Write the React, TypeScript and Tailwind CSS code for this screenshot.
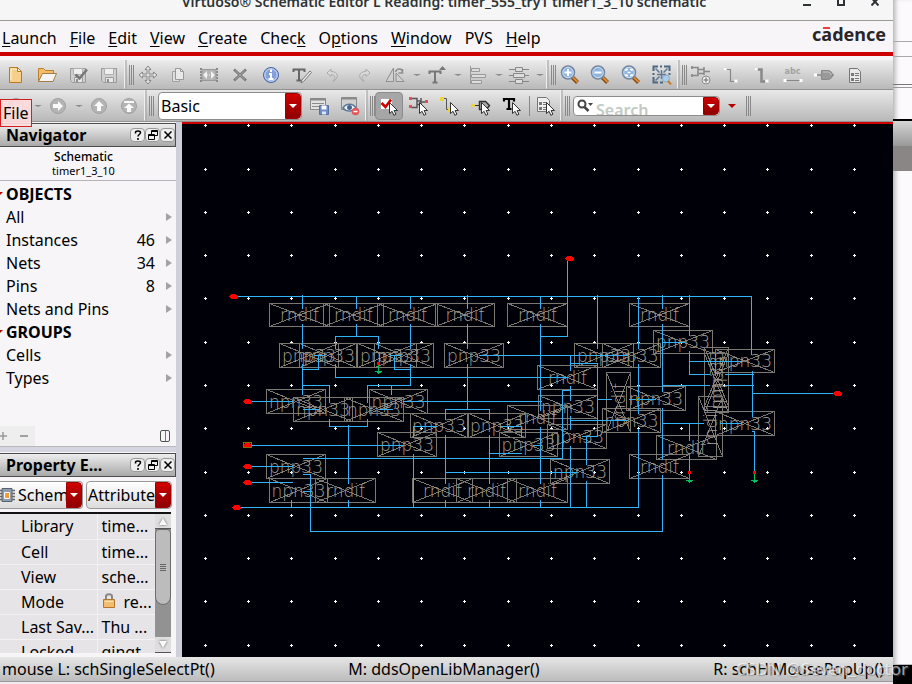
import { useState } from 'react';
import type { ReactNode } from 'react';

type Box = [x: number, y: number, label: string, w?: number, h?: number];
type Wire = string;

const MENUS = [
  { label: 'Launch', key: 0 },
  { label: 'File', key: 0 },
  { label: 'Edit', key: 0 },
  { label: 'View', key: 0 },
  { label: 'Create', key: 0 },
  { label: 'Check', key: 4 },
  { label: 'Options', key: 1 },
  { label: 'Window', key: 0 },
  { label: 'PVS', key: -1 },
  { label: 'Help', key: 0 },
];

const OBJECTS = [
  { name: 'All', count: '' },
  { name: 'Instances', count: '46' },
  { name: 'Nets', count: '34' },
  { name: 'Pins', count: '8' },
  { name: 'Nets and Pins', count: '' },
];

const GROUPS = [
  { name: 'Cells', count: '' },
  { name: 'Types', count: '' },
];

const PROPERTIES = [
  ['Library', 'time...'],
  ['Cell', 'time...'],
  ['View', 'sche...'],
  ['Mode', 're...'],
  ['Last Sav...', 'Thu ...'],
  ['Locked', 'qingt'],
];

// instances, canvas coordinates of the top left corner
const BOXES: Box[] = [
  [269, 303, 'rndif', 60, 23],
  [323, 303, 'rndif', 60, 23],
  [377, 303, 'rndif', 60, 23],
  [435, 303, 'rndif', 59, 23],
  [507, 303, 'rndif', 60, 23],
  [629, 303, 'rndif', 60, 23],
  [279, 343, 'pnp33'],
  [299, 343, 'pnp33', 57],
  [357, 343, 'pnp33'],
  [374, 343, 'pnp33'],
  [444, 343, 'pnp33'],
  [574, 343, 'pnp33'],
  [602, 343, 'pnp33', 58],
  [653, 330, 'pnp33', 59, 23],
  [715, 349, 'npn33', 59, 23],
  [715, 411, 'npn33'],
  [626, 386, 'npn33'],
  [602, 408, 'npn33', 58],
  [656, 435, 'rndif', 60],
  [629, 454, 'rndif', 60],
  [537, 365, 'rndif', 60],
  [538, 395, 'npn33', 59, 23],
  [507, 405, 'rndif', 60],
  [547, 424, 'npn33'],
  [499, 432, 'pnp33', 58],
  [410, 413, 'pnp33', 57],
  [468, 413, 'pnp33', 57],
  [550, 459, 'npn33'],
  [412, 478, 'rndif', 60],
  [456, 478, 'rndif', 60],
  [507, 478, 'rndif', 60],
  [266, 389, 'npn33'],
  [293, 397, 'npn33'],
  [344, 397, 'npn33'],
  [369, 389, 'npn33', 58],
  [377, 432, 'pnp33'],
  [266, 454, 'pnp33'],
  [269, 478, 'npn33', 58],
  [315, 478, 'rndif', 60],
  [704, 347, 'pnp33', 24, 59],
  [704, 353, 'pnp33', 24, 59],
  [698, 396, 'rndif', 24, 60],
  [606, 372, 'rndif', 24, 60],
];

const WIRES: Wire[] = [
  'M234 296H751V354',
  'M302 294V308M356 295V308M410 295V308M467 294V308M540 295V308M597 294V348M638 295V348M662 294V308M689 294V335',
  'M302 323V348M410 323V348M467 323V348M356 323V336M335 348V336H378V348',
  'M302 363V394M302 369H318V355M313 355H324M335 363V377H568',
  'M410 363V385M410 369H394V355M389 355H400',
  'M302 385H329V402M410 385H367V402M391 385V394',
  'M247 401H292M302 409H319M378 409H392M402 401H541',
  'M329 418V426H367V418M348 424V483M348 499V507',
  'M247 445H403M247 466H292M247 482H292',
  'M302 458H562V390H570M302 474H310V531H662V474M302 491H311',
  'M236 507H638V428M291 499V507',
  'M436 426H413V437M413 453V507M467 363V409M445 419V409H489V419',
  'M445 434V483M445 499V507M489 434V483M489 499V507M500 426H521V436M489 453H521M445 472H576',
  'M569 258H567V336H540M540 323V410M540 426V483M540 499V507M532 445H541',
  'M478 355H627M570 354V370M570 385V400M570 415V429M570 445V507M570 363H597V436H581',
  'M570 420H627M597 399H611M628 399H655M586 436V464M586 480V507',
  'M638 363V413M662 323V391M662 407V459',
  'M689 350V374H709M689 361H741M662 342H684M662 385H709M724 385H753M724 374H753',
  'M752 370V416M752 393H837M662 423H703M719 423H741M689 422V440M689 455V472M751 431H754V472',
];

const PINS = [
  [233, 296],
  [247, 401],
  [247, 445],
  [247, 466],
  [247, 482],
  [236, 507],
  [569, 258],
  [837, 393],
];

const GROUNDS = [
  [378, 363],
  [689, 472],
  [754, 472],
];

const GRID_COLS = Array.from({ length: 16 }, (_, i) => Math.floor(205.3 + i * 43.27));
const GRID_ROWS = Array.from({ length: 13 }, (_, i) => Math.floor(125.9 + i * 43.27));

function Instance({ box }: { box: Box }) {
  const [x, y, label, w = 59, h = 24] = box;
  const cx = x + w / 2;
  const cy = y + h / 2;
  return (
    <g>
      <path
        d={`M${x} ${y}h${w}v${h}h${-w}zl${w} ${h}M${x} ${y + h}l${w} ${-h}`}
        fill="none"
        stroke="#7b7871"
      />
      <text
        x={cx}
        y={cy + 6}
        textAnchor="middle"
        fill="#a6a298"
        transform={h > w ? `rotate(-90 ${cx} ${cy})` : undefined}
        className="font-['DejaVu_Sans_ExtraLight','DejaVu_Sans',sans-serif] text-[17px] font-extralight"
      >
        {label}
      </text>
    </g>
  );
}

function SchematicCanvas() {
  return (
    <svg
      viewBox="181.5 123.5 711 533"
      preserveAspectRatio="xMinYMin slice"
      className="block h-full w-full bg-[#000008]"
      shapeRendering="crispEdges"
      role="img"
      aria-label="timer1_3_10 schematic"
    >
      {GRID_ROWS.map((y) =>
        GRID_COLS.map((x) => <path key={`${x}-${y}`} d={`M${x - 1.5} ${y}h3M${x} ${y - 1.5}v3`} stroke="#fff" />)
      )}
      {BOXES.map((box, i) => (
        <Instance key={i} box={box} />
      ))}
      {WIRES.map((d) => (
        <path key={d} d={d} fill="none" stroke="#2fb3fb" />
      ))}
      {GROUNDS.map(([x, y]) => (
        <g key={x}>
          <path d={`M${x} ${y}v10M${x - 3.5} ${y + 8}h7M${x - 2} ${y + 9}h4`} stroke="#00c060" />
          <rect x={x - 1.5} y={y - 1.5} width="3" height="3" fill="#f00" />
        </g>
      ))}
      {PINS.map(([x, y]) => (
        <g key={`${x}-${y}`}>
          <path d={`M${x - 2.5} ${y + 2}h5M${x + 3} ${y - 2}v4`} stroke="#00b050" />
          <path d={`M${x - 4.5} ${y - 0.5}l3 -2h3l3 2v1l-2 2h-4l-3 -2z`} fill="#f00" />
        </g>
      ))}
      <rect x="243" y="442" width="8" height="5" fill="none" stroke="#7d7200" />
      <rect x="636" y="397" width="3" height="3" fill="none" stroke="#7d7200" />
    </svg>
  );
}

function Icon({ children }: { children: ReactNode }) {
  return (
    <svg viewBox="0 0 20 20" className="h-5 w-5 shrink-0" fill="none" aria-hidden="true">
      {children}
    </svg>
  );
}

function Cursor() {
  return <path d="M10.5 6.5v11l2.6-2.2 1.8 4 2-1-1.8-3.8h3.4z" fill="#fff" stroke="#333" strokeWidth="1" />;
}

function Magnifier({ children }: { children?: ReactNode }) {
  return (
    <Icon>
      <path d="M12 12l5.500 5.500" stroke="#7a4a1c" strokeWidth="4" />
      <path d="M12.500 12l5 5" stroke="#e38b2c" strokeWidth="2" />
      <circle cx="8" cy="7.500" r="6.500" fill="#8fb4de" stroke="#7486a0" strokeWidth="1.500" />
      <circle cx="8" cy="7.500" r="5.200" stroke="#cfe0f4" />
      {children}
    </Icon>
  );
}

function FloppyShape() {
  return (
    <>
      <path d="M2.500 3.500h15v14h-13l-2-2z" fill="#cfcfcf" stroke="#999" />
      <path d="M5.500 3.500h9v6h-9z" fill="#efefef" stroke="#b0b0b0" />
      <path d="M6.500 12.500h8v5h-8z" fill="#e8e8e8" stroke="#9a9a9a" />
      <path d="M8 14h2v3H8z" fill="#8c8c8c" />
    </>
  );
}

const icons = {
  newFile: (
    <Icon>
      <path d="M3.500 2.500h8l4 4v11h-12z" fill="#f6d08a" stroke="#b97a24" />
      <path d="M5 15V4h5l4 4" stroke="#fff3d2" />
      <path d="M11.500 2.500v4h4z" fill="#fff6df" stroke="#b97a24" />
    </Icon>
  ),
  open: (
    <Icon>
      <path d="M1.500 16.500v-13h5l2 2h8v4" fill="#f2bd68" stroke="#bd802d" />
      <path d="M1.500 16.500l4-8h14l-3.500 8z" fill="#f4f4f4" stroke="#a77b43" />
    </Icon>
  ),
  saveCheck: (
    <Icon>
      <FloppyShape />
      <path d="M7.500 9.500l4 4 7.500-9" stroke="#777" strokeWidth="2.500" />
    </Icon>
  ),
  save: (
    <Icon>
      <FloppyShape />
    </Icon>
  ),
  move: (
    <Icon>
      <path
        d="M10 1l3 3.500h-2v4.500h4.500V7l3.500 3-3.500 3v-2H11v4.500h2L10 19l-3-3.500h2V11H4.500v2L1 10l3.500-3v2H9V4.500H7z"
        fill="#e2e2e2"
        stroke="#888"
      />
    </Icon>
  ),
  copy: (
    <Icon>
      <path d="M4.500 6.500h7v10h-7z" fill="#dedede" stroke="#a1a1a1" />
      <path d="M7.500 3.500h5l3 3v8h-8z" fill="#e9e9e9" stroke="#999" />
      <path d="M12.500 3.500v3h3" stroke="#999" />
    </Icon>
  ),
  stretch: (
    <Icon>
      <path d="M2 3v14M18 3v14" stroke="#888" strokeWidth="2" strokeDasharray="2 1" />
      <path d="M3 4.500h14v11H3z" stroke="#999" fill="#b4b4b4" />
      <path d="M4 10l4-4v8zM16 10l-4-4v8z" fill="#f2f2f2" />
      <path d="M8 10h4" stroke="#f2f2f2" strokeWidth="1" strokeDasharray="1 1" />
    </Icon>
  ),
  remove: (
    <Icon>
      <path d="M4 4.500l12 11M16 4.500l-12 11" stroke="#777" strokeWidth="2.500" />
      <path d="M5 5.500l10 9M15 5.500l-10 9" stroke="#a6a6a6" />
    </Icon>
  ),
  info: (
    <Icon>
      <circle cx="10" cy="10" r="7.500" fill="#84a1dc" stroke="#4a62a2" />
      <circle cx="10" cy="10" r="6.200" stroke="#d5e1fa" />
      <path d="M10 4.500v2.500M8 9h2v5M7.500 14h5" stroke="#fff" strokeWidth="2" />
    </Icon>
  ),
  editText: (
    <Icon>
      <path d="M1.500 7V4.500h11V7M7 4.500v11M4.500 15.500h5" stroke="#666" strokeWidth="2" />
      <path d="M9 18l1-3 8-9 1.500 1.500-8 9z" fill="#eee" stroke="#777" />
    </Icon>
  ),
  undo: (
    <Icon>
      <path d="M8 4L4 8l4 3.500V9.500c5 0 5 3.500 2 7 6-3 6-10-2-10z" fill="#dadada" stroke="#aaa" />
    </Icon>
  ),
  redo: (
    <Icon>
      <path d="M12 4l4 4-4 3.500V9.500c-5 0-5 3.500-2 7-6-3-6-10 2-10z" fill="#dadada" stroke="#aaa" />
    </Icon>
  ),
  mirror: (
    <Icon>
      <path d="M1 16.500L8.500 3v13.500zM11 16.500V8l8 8.500z" fill="#d0d0d0" stroke="#8f8f8f" />
      <path d="M10.500 7c1-4 7-4 7 .5M17.500 4v4h-4" stroke="#8f8f8f" strokeWidth="1.500" />
    </Icon>
  ),
  textUp: (
    <Icon>
      <path d="M2.500 9V6.500h11V9M8 6.500v11M5.500 17.500h5" stroke="#777" strokeWidth="2" />
      <path d="M12 5l3.500-4L19 5z" fill="#777" />
    </Icon>
  ),
  align: (
    <Icon>
      <path d="M2.500 1v18" stroke="#999" />
      <path d="M3.500 3.500h8v3h-8zM3.500 9.500h14v3h-14zM3.500 15.500h10v3h-10z" fill="#ddd" stroke="#999" />
    </Icon>
  ),
  distribute: (
    <Icon>
      <path d="M0 4.500h20M0 10.500h20M0 16.500h20" stroke="#888" />
      <path d="M6.500 2.500h7v4h-7zM4.500 8.500h11v4h-11zM6.500 14.500h7v4h-7z" fill="#ddd" stroke="#888" />
    </Icon>
  ),
  zoomIn: (
    <Magnifier>
      <path d="M8 4v7M4.500 7.500h7" stroke="#fff" strokeWidth="2" />
    </Magnifier>
  ),
  zoomOut: (
    <Magnifier>
      <path d="M4.500 7.500h7" stroke="#fff" strokeWidth="2" />
    </Magnifier>
  ),
  zoomFit: (
    <Magnifier>
      <path d="M5 6V4.500h2M9 4.500h2V6M11 9v1.500H9M7 10.500H5V9M6.500 7.500h3" stroke="#fff" strokeWidth="1.500" />
    </Magnifier>
  ),
  zoomSelect: (
    <Icon>
      <path d="M1.500 6V1.500H6M12 1.500h5.500V6M1.500 12v5.500H6M8 1.500h2M1.500 8v2M17.500 8v2M8 17.500h3" stroke="#4c6884" strokeWidth="2" />
      <path d="M3.500 3.500l4 4M15.500 3.500l-4 4M3.500 15.500l4-4M9.500 5v9M5 9.500h9" stroke="#5c7995" strokeWidth="1.500" />
      <circle cx="14" cy="13.500" r="3.500" fill="#a9cdec" stroke="#8ba9c6" />
      <path d="M16 16l3 3.500" stroke="#c57b2d" strokeWidth="2" />
    </Icon>
  ),
  addInstance: (
    <Icon>
      <path d="M0 2.500h7v8H0M7 4.500h6M7 8.500h6M13 2v8M13 6.500h6M1 1v3M1 9v3" stroke="#888" strokeWidth="1.500" />
      <circle cx="15" cy="15" r="4" fill="#f3f3f3" stroke="#888" />
      <path d="M15 12.500v5M12.500 15h5" stroke="#888" strokeWidth="1.500" />
    </Icon>
  ),
  wire: (
    <Icon>
      <path d="M4 4.500h5.500v12H14" stroke="#888" strokeWidth="1.200" />
      <path d="M2.500 2.500h3v3h-3zM13.500 14.500h3v3h-3z" fill="#fff" stroke="#ddd" />
    </Icon>
  ),
  wideWire: (
    <Icon>
      <path d="M4 4.500h5.500v12H14" stroke="#888" strokeWidth="2.500" />
      <path d="M2.500 2.500h3v3h-3zM13.500 14.500h3v3h-3z" fill="#fff" stroke="#ddd" />
    </Icon>
  ),
  wireName: (
    <span className="flex flex-col items-center">
      <span className="font-['DejaVu_Sans',sans-serif] text-[8px] leading-[10px] font-bold text-[#a2a2a2]">abc</span>
      <svg viewBox="0 0 20 6" className="h-[6px] w-5" fill="none" aria-hidden="true">
        <path d="M2 3.500h16" stroke="#888" />
        <path d="M.5 2h3v3h-3zM16.500 2h3v3h-3z" fill="#fff" />
      </svg>
    </span>
  ),
  pin: (
    <Icon>
      <path d="M0 8.500h3v3H0z" fill="#fff" />
      <path d="M3 10h17" stroke="#888" strokeWidth="1.500" />
      <path d="M7.500 5.500h6c3 0 5 2 5 4.500s-2 4.500-5 4.500h-6z" fill="#999" stroke="#888" />
      <path d="M9 7h4.500c2 0 3.500 1 3.500 3" stroke="#c4c4c4" />
    </Icon>
  ),
  report: (
    <Icon>
      <path d="M4.500 3.500h8l3 3v11h-11z" fill="#e9e9e9" stroke="#777" />
      <path d="M6 8h3v3H6zM6 13h3v3H6z" fill="#777" />
      <path d="M10 8.500h4M10 10.500h4M10 13.500h4M10 15.500h4" stroke="#777" />
    </Icon>
  ),
  left: (
    <Icon>
      <circle cx="10" cy="10" r="7.500" fill="#bdbdbd" stroke="#a5a5a5" />
      <path d="M15 8v4h-5v3l-5-5 5-5v3z" fill="#eee" />
    </Icon>
  ),
  right: (
    <Icon>
      <circle cx="10" cy="10" r="7.500" fill="#b4b4b4" stroke="#a0a0a0" />
      <path d="M5 8v4h5v3l5-5-5-5v3z" fill="#fafafa" />
    </Icon>
  ),
  up: (
    <Icon>
      <circle cx="10" cy="10" r="7.500" fill="#b4b4b4" stroke="#a0a0a0" />
      <path d="M8 15h4v-5h3l-5-5-5 5h3z" fill="#fafafa" />
    </Icon>
  ),
  top: (
    <Icon>
      <circle cx="10" cy="10" r="7.500" fill="#b4b4b4" stroke="#a0a0a0" />
      <path d="M8 16h4v-4h3l-5-4.500L5 12h3zM5 5h10v2H5z" fill="#fafafa" />
    </Icon>
  ),
  saveWorkspace: (
    <Icon>
      <path d="M.5 2.500h15v11H.5z" fill="#e2e2e2" stroke="#8a8a8a" />
      <path d="M.5 2.500h15v2H.5z" fill="#8a8a8a" />
      <path d="M2 7.500h12M2 10.500h8" stroke="#8b8b8b" />
      <path d="M9.500 9.500h9v9h-9z" fill="#6d8cc4" stroke="#56709f" />
      <path d="M11.500 9.500h5v4h-5z" fill="#fff" />
      <path d="M12 15.500h4v3h-4z" fill="#dce5f5" />
    </Icon>
  ),
  hideWorkspace: (
    <Icon>
      <path d="M1.500 1.500h15v12h-15z" fill="#d0d0d0" stroke="#8a8a8a" />
      <path d="M1.500 1.500h15v2h-15z" fill="#8a8a8a" />
      <path d="M3 12c3-5 10-5 13 0-3 4-10 4-13 0z" fill="#f2f5fa" stroke="#5b7699" strokeWidth="1.500" />
      <circle cx="9.500" cy="11.500" r="2.500" fill="#466790" />
      <circle cx="15.500" cy="15.500" r="3.800" fill="#e25757" />
      <path d="M13.500 15.500h4" stroke="#fff" strokeWidth="1.500" />
    </Icon>
  ),
  selectAll: (
    <Icon>
      <path d="M1.500 2.500h12v11h-12z" fill="#fff" stroke="#aaa" />
      <path d="M2.500 7l4 4L12 3.500" stroke="#d00000" strokeWidth="2.500" />
      <Cursor />
    </Icon>
  ),
  selectInstance: (
    <Icon>
      <path d="M2 2.500h6v9H2M8 5h4M8 8.500h4M12 2v9M12 6h6" stroke="#555" strokeWidth="1.500" />
      <path d="M0 1h3v3H0zM0 9h3v3H0zM16 4h3v3h-3z" fill="#e04e56" />
      <Cursor />
    </Icon>
  ),
  selectWire: (
    <Icon>
      <path d="M3 2.500h3.500v11H10" stroke="#555" />
      <path d="M0 1h4v4H0zM8 12h4v4H8z" fill="#ead53a" />
      <Cursor />
    </Icon>
  ),
  selectPin: (
    <Icon>
      <path d="M3 9.500h6" stroke="#333" />
      <path d="M8.500 5.500h6l4 4-3 4H8.500z" fill="#aaa" stroke="#333" strokeWidth="1.500" />
      <path d="M0 8h4v3H0z" fill="#ead53a" />
      <Cursor />
    </Icon>
  ),
  selectText: (
    <Icon>
      <path d="M2 5.500V3h10v2.500M7 3v10.500M4.500 13h5" stroke="#000" strokeWidth="2.200" />
      <Cursor />
    </Icon>
  ),
  selectReport: (
    <Icon>
      <path d="M1.500 1.500h9l3 3v11h-12z" fill="#eee" stroke="#777" />
      <path d="M3 6h3v3H3zM3 11h3v3H3z" fill="#777" />
      <path d="M7 6.500h4M7 8.500h4M7 11.500h4M7 13.500h4" stroke="#777" />
      <Cursor />
    </Icon>
  ),
};

function Handle() {
  return (
    <span className="ml-[2px] h-[20px] w-[5px] shrink-0 border-x border-[#8a8a8a] bg-[linear-gradient(90deg,transparent_33%,#8a8a8a_33%,#8a8a8a_66%,transparent_66%)]" />
  );
}

function Divider() {
  return <span className="h-full w-[3px] shrink-0 rounded-b border-l border-[#efefef] bg-[#a8a8a8]/60" />;
}

function Dash() {
  return (
    <button aria-label="More" className="flex w-[13px] shrink-0 justify-center">
      <span className="h-0 w-0 border-x-[4px] border-t-[2px] border-x-transparent border-t-[#8b8b8b]" />
    </button>
  );
}

function ToolButton({ name, narrow, active }: { name: keyof typeof icons; narrow?: boolean; active?: boolean }) {
  return (
    <button
      aria-label={name}
      className={`flex h-7 shrink-0 items-center justify-center ${narrow ? 'w-7' : 'w-[31px]'} ${
        active ? 'rounded border border-[#8c8c8c] bg-[#a6a6a6]' : ''
      }`}
    >
      {icons[name]}
    </button>
  );
}

function RedArrow() {
  return (
    <span className="pointer-events-none flex w-4 shrink-0 items-center justify-center rounded-r border border-[#a00000] bg-gradient-to-b from-[#d00000] to-[#8e0000]">
      <span className="h-0 w-0 border-x-[4px] border-t-[4px] border-x-transparent border-t-white" />
    </span>
  );
}

function Toolbars() {
  const [query, setQuery] = useState('');
  return (
    <div className="shrink-0">
      <div className="flex h-[30px] items-center overflow-hidden border-b border-[#929292] bg-gradient-to-b from-[#ececec] to-[#b9b9b9]">
        <ToolButton name="newFile" />
        <ToolButton name="open" />
        <ToolButton name="saveCheck" />
        <ToolButton name="save" />
        <Divider />
        <Handle />
        <ToolButton name="move" narrow />
        <ToolButton name="copy" />
        <ToolButton name="stretch" />
        <ToolButton name="remove" />
        <ToolButton name="info" />
        <ToolButton name="editText" />
        <ToolButton name="undo" />
        <ToolButton name="redo" />
        <ToolButton name="mirror" />
        <Dash />
        <ToolButton name="textUp" narrow />
        <Dash />
        <ToolButton name="align" narrow />
        <Dash />
        <ToolButton name="distribute" narrow />
        <Dash />
        <Divider />
        <Handle />
        <ToolButton name="zoomIn" narrow />
        <ToolButton name="zoomOut" />
        <ToolButton name="zoomFit" />
        <ToolButton name="zoomSelect" />
        <Divider />
        <Handle />
        <ToolButton name="addInstance" narrow />
        <ToolButton name="wire" />
        <ToolButton name="wideWire" />
        <ToolButton name="wireName" />
        <ToolButton name="pin" />
        <ToolButton name="report" />
      </div>
      <div className="flex h-8 items-center border-b border-[#929292] bg-gradient-to-b from-[#e8e8e8] to-[#b9b9b9]">
        <ToolButton name="left" />
        <Dash />
        <ToolButton name="right" narrow />
        <Dash />
        <ToolButton name="up" narrow />
        <ToolButton name="top" />
        <Divider />
        <Handle />
        <div className="mx-1 flex h-7 w-36 rounded border border-[#8d8d8d] bg-white">
          <select aria-label="Workspace" className="min-w-0 flex-1 appearance-none pl-[2px] text-[16px] leading-5 outline-none">
            <option>Basic</option>
          </select>
          <RedArrow />
        </div>
        <ToolButton name="saveWorkspace" narrow />
        <ToolButton name="hideWorkspace" />
        <Divider />
        <Handle />
        <ToolButton name="selectAll" narrow active />
        <ToolButton name="selectInstance" />
        <ToolButton name="selectWire" />
        <ToolButton name="selectPin" />
        <ToolButton name="selectText" />
        <span className="mx-[2px] h-5 w-px bg-[#888]" />
        <ToolButton name="selectReport" narrow />
        <Divider />
        <Handle />
        <div className="ml-[3px] flex h-5 w-[147px] overflow-hidden rounded border border-[#8d8d8d] bg-white">
          <svg viewBox="0 0 20 18" className="h-[18px] w-5 shrink-0" fill="none" aria-hidden="true">
            <circle cx="8" cy="7" r="3.500" stroke="#444" strokeWidth="2" />
            <path d="M10.500 10l4 4" stroke="#444" strokeWidth="2.500" />
            <path d="M14 6h5l-2.500 3z" fill="#444" />
          </svg>
          <input
            aria-label="Search"
            placeholder="Search"
            value={query}
            onChange={(e) => setQuery(e.target.value)}
            className="h-6 min-w-0 flex-1 pt-[2px] pl-[2px] text-[16px] leading-5 font-semibold outline-none placeholder:text-[#c2cac2]"
          />
          <RedArrow />
        </div>
        <button aria-label="Search options" className="flex w-6 justify-center">
          <span className="h-0 w-0 border-x-[4px] border-t-[4px] border-x-transparent border-t-[#b80000]" />
        </button>
        <Handle />
      </div>
    </div>
  );
}

function DockHeader({ title }: { title: string }) {
  return (
    <div className="flex h-6 shrink-0 items-center border border-l-0 border-[#4d4d4d] bg-gradient-to-b from-[#eeeeee] to-[#a9a9a9] pl-[6px]">
      <h2 className="flex-1 text-[16px] leading-5 font-bold">{title}</h2>
      <DockButton label="Help">
        <path d="M3.500 4.500v-1c0-2 5-2 5 0 0 2-2.500 2-2.500 4M6 9v2" stroke="#000" strokeWidth="1.500" />
      </DockButton>
      <DockButton label="Float">
        <path d="M4.500 5v-3.500h6v5H8M4 2.500h7M1.500 5.500h6v5h-6zM1 6.500h7" stroke="#000" />
      </DockButton>
      <DockButton label="Close">
        <path d="M2.500 2.500l7 7M9.500 2.500l-7 7" stroke="#000" strokeWidth="1.500" />
      </DockButton>
    </div>
  );
}

function DockButton({ label, children }: { label: string; children: ReactNode }) {
  return (
    <button aria-label={label} className="flex h-[14px] w-[15px] shrink-0 items-center justify-center rounded border border-[#999] bg-[#efefef]">
      <svg viewBox="0 0 12 12" className="h-3 w-3" fill="none" aria-hidden="true">
        {children}
      </svg>
    </button>
  );
}

function TreeHeading({ children }: { children: ReactNode }) {
  return (
    <h3 className="flex h-[23px] items-center font-bold">
      <span className="mr-[3px] h-0 w-[3px] border-t-[3px] border-r-[3px] border-t-[#b80000] border-r-transparent" />
      {children}
    </h3>
  );
}

function TreeRow({ name, count }: { name: string; count: string }) {
  return (
    <li className="flex h-[23px] items-center pr-1 pl-[6px]">
      <span className="flex-1">{name}</span>
      <span className="mr-[11px]">{count}</span>
      <span className="h-0 w-0 border-y-[4px] border-l-[6px] border-y-transparent border-l-[#a3a3a3]" />
    </li>
  );
}

function Navigator() {
  return (
    <section className="flex min-h-0 flex-1 flex-col border-b border-[#b7b7bd] pt-px">
      <DockHeader title="Navigator" />
      <div className="flex h-[34px] shrink-0 flex-col items-center justify-center border-b border-[#b5b3b7] pr-[9px]">
        <p className="text-[12px] leading-[14px] font-medium">Schematic</p>
        <p className="text-[11px] leading-[14px]">timer1_3_10</p>
      </div>
      <div className="min-h-0 flex-1 overflow-hidden pt-px text-[16px] leading-5">
        <TreeHeading>OBJECTS</TreeHeading>
        <ul>
          {OBJECTS.map((row) => (
            <TreeRow key={row.name} {...row} />
          ))}
        </ul>
        <TreeHeading>GROUPS</TreeHeading>
        <ul>
          {GROUPS.map((row) => (
            <TreeRow key={row.name} {...row} />
          ))}
        </ul>
      </div>
      <div className="flex h-5 shrink-0 items-center justify-between pr-[6px]">
        <div className="flex h-5 w-[35px] items-center justify-between bg-[#eeeeee] pr-[7px]">
          <button aria-label="Add" className="flex h-5 w-[7px] items-center">
            <svg viewBox="0 0 7 8" className="h-2 w-[7px]" aria-hidden="true">
              <path d="M0 4h7M3 0v8" stroke="#999" strokeWidth="1.500" />
            </svg>
          </button>
          <button aria-label="Remove" className="h-[2px] w-2 bg-[#a0a0a0]" />
        </div>
        <button aria-label="Columns" className="flex h-3 w-[10px] justify-center rounded-xs border border-[#4d544d]">
          <span className="h-full w-px bg-[#777]" />
        </button>
      </div>
    </section>
  );
}

function PropertyEditor() {
  return (
    <section className="flex h-[205px] shrink-0 flex-col overflow-hidden pt-px">
      <DockHeader title="Property E..." />
      <div className="mt-1 flex h-7 shrink-0 gap-[3px] pr-1 text-[16px]">
        <div className="flex w-[83px] overflow-hidden rounded-r border border-l-0 border-[#999] bg-gradient-to-b from-white to-[#dcdcdc]">
          <svg viewBox="0 0 15 16" className="mt-[5px] h-4 w-[15px] shrink-0" fill="none" aria-hidden="true">
            <path d="M0 3.500h15M0 6.500h15M0 9.500h15M0 12.500h15" stroke="#666" strokeWidth="1.500" />
            <path d="M2 1.500h10v13H2z" fill="#8f9cab" stroke="#5a646f" />
            <path d="M4.500 5.500h5v6h-5z" fill="#f49b3b" stroke="#fff" />
          </svg>
          <select aria-label="Object type" className="min-w-0 flex-1 appearance-none overflow-hidden pl-[3px] text-clip outline-none">
            <option>Schematic</option>
          </select>
          <RedArrow />
        </div>
        <div className="flex min-w-0 flex-1 rounded border border-[#999] bg-gradient-to-b from-white to-[#dcdcdc]">
          <select aria-label="Show" className="min-w-0 flex-1 appearance-none overflow-hidden pl-px text-clip outline-none">
            <option>Attribute</option>
          </select>
          <RedArrow />
        </div>
      </div>
      <div className="mt-[3px] mr-[5px] mb-1 flex min-h-0 flex-1 border-t-2 border-[#111] bg-[#e7e4e7]">
        <div className="min-w-0 flex-1 overflow-hidden">
          <table className="w-full table-fixed border-collapse text-[16px] leading-5">
            <tbody>
              {PROPERTIES.map(([name, value]) => (
                <tr key={name} className="h-[25px] border-b border-[#f3f1f3]">
                  <th scope="row" className="w-[97px] border-r border-[#f3f1f3] pl-[21px] text-left font-normal whitespace-nowrap">
                    {name}
                  </th>
                  <td className="overflow-hidden pl-1 whitespace-nowrap">
                    {name === 'Mode' && (
                      <svg viewBox="0 0 14 16" className="mr-[8px] inline-block h-4 w-[14px] align-[-1px]" fill="none" aria-hidden="true">
                        <path d="M4 7V3.500c0-3 6-3 6 0V7" stroke="#888" strokeWidth="2" />
                        <path d="M1.500 6.500h11v8h-11z" fill="#f4bc6c" stroke="#b4762d" />
                        <path d="M3 8.500h8" stroke="#ffe9be" />
                      </svg>
                    )}
                    {value}
                  </td>
                </tr>
              ))}
            </tbody>
          </table>
        </div>
        <div className="flex w-4 shrink-0 flex-col bg-[#929292]">
          <button aria-label="Scroll up" className="flex h-[15px] shrink-0 items-center justify-center border-b border-[#555] bg-[#dedede]">
            <span className="h-0 w-0 border-x-[4px] border-b-[7px] border-x-transparent border-b-[#fafafa] drop-shadow-[0_0_1px_#555]" />
          </button>
          <div className="flex h-[76px] flex-col items-center justify-center gap-px rounded-b-lg rounded-t border border-[#6d6d6d] bg-[#bcbcbc]">
            <span className="h-px w-[6px] bg-[#666]" />
            <span className="h-px w-[6px] bg-[#666]" />
            <span className="h-px w-[6px] bg-[#666]" />
            <span className="h-px w-[6px] bg-[#666]" />
          </div>
          <button aria-label="Scroll down" className="mt-auto flex h-4 shrink-0 items-center justify-center border-b border-[#555] bg-[#dedede]">
            <span className="h-0 w-0 border-x-[4px] border-t-[7px] border-x-transparent border-t-[#fafafa] drop-shadow-[0_0_1px_#555]" />
          </button>
        </div>
      </div>
    </section>
  );
}

function TitleBar() {
  return (
    <header className="relative flex h-[21px] shrink-0 items-start justify-center overflow-hidden border-b border-[#999b94] bg-[#f7f6f7] pr-[5px]">
      <h1 className="-mt-2 text-[14px] leading-5 font-semibold whitespace-nowrap text-[#2e3436]">
        Virtuoso® Schematic Editor L Reading: timer_555_try1 timer1_3_10 schematic
      </h1>
      <div className="absolute top-0 right-[14px] flex gap-[26px]">
        <button aria-label="Minimize" className="h-[6px] w-2 border-b-2 border-[#2e3436]" />
        <button aria-label="Maximize" className="h-[6px] w-2 border-2 border-t-0 border-[#2e3436]" />
        <button aria-label="Close" className="h-[6px] w-2">
          <svg viewBox="0 0 8 6" className="block h-[6px] w-2" aria-hidden="true">
            <path d="M.5 -2l7 7.500M7.500 -2l-7 7.500" stroke="#2e3436" strokeWidth="2" />
          </svg>
        </button>
      </div>
    </header>
  );
}

function MenuBar() {
  return (
    <nav className="flex h-[31px] shrink-0 items-center justify-between bg-[#f8f5f9] pr-[7px] pl-[2px]">
      <div className="flex gap-[13px] pt-[2px] text-[16px] leading-5">
        {MENUS.map(({ label, key }) => (
          <button key={label}>
            {key < 0 ? (
              label
            ) : (
              <>
                {label.slice(0, key)}
                <span className="underline underline-offset-2">{label[key]}</span>
                {label.slice(key + 1)}
              </>
            )}
          </button>
        ))}
      </div>
      <div className="mb-[6px] text-[18px] leading-5 font-bold text-[#2b2528]">
        c
        <span className="relative">
          a<span className="absolute inset-x-[2px] top-[5px] h-[2px] bg-[#e84040]" />
        </span>
        dence
      </div>
    </nav>
  );
}

// sliver of the window that sits behind the editor
function BackWindow() {
  return (
    <aside className="flex w-[19px] shrink-0 flex-col bg-[#fcfafc] shadow-[inset_5px_0_5px_-3px_#77777799]">
      <div className="h-[42px] border-b border-[#aaa8aa]" />
      <div className="h-[15px] border-b border-[#aaa8aa]" />
      <div className="h-7 border-b border-[#777]" />
      <div className="h-[3px] border-b border-[#999]" />
      <div className="h-[33px] border-b-2 border-black" />
      <div className="h-[25px] bg-gradient-to-b from-[#d5d5d5] to-[#999]" />
      <div className="h-[25px] bg-[#8a8686]" />
      <div className="flex-1" />
      <div className="h-5 border-t border-[#bbb] bg-black" />
    </aside>
  );
}

export default function App() {
  return (
    <div className="relative flex h-screen overflow-hidden bg-white font-['Noto_Sans',sans-serif] text-black">
      <div className="flex min-w-0 flex-1 flex-col bg-[#f8f5f9]">
        <TitleBar />
        <MenuBar />
        <div className="mb-1 h-1 shrink-0 bg-[#cc0000]" />
        <Toolbars />
        <div className="flex min-h-0 flex-1">
          <div className="flex w-44 shrink-0 flex-col bg-[#f8f5f9]">
            <Navigator />
            <div className="h-[5px] shrink-0 bg-[#d5d5df]" />
            <PropertyEditor />
          </div>
          <div className="w-[6px] shrink-0 bg-[#d0d0dc]" />
          <main className="min-w-0 flex-1 border-t-2 border-[#cc0000]">
            <SchematicCanvas />
          </main>
        </div>
        <footer className="grid h-[25px] shrink-0 grid-cols-3 items-center border-b border-[#999] bg-gradient-to-b from-[#e6e6e6] to-[#bcbcbc] pr-[7px] pl-[2px] text-[16px] leading-5 whitespace-nowrap">
          <span>mouse L: schSingleSelectPt()</span>
          <span className="text-center">M: ddsOpenLibManager()</span>
          <span className="pr-[2px] text-right">R: schHiMousePopUp()</span>
        </footer>
        <div className="h-[2px] shrink-0 bg-[#f4e8ee]" />
      </div>
      <BackWindow />
      <div className="absolute top-[99px] left-0 border border-[#d02020] bg-[#ffdcdc]/90 px-[2px] py-[2px] text-[16px] leading-[22px]">
        File
      </div>
      <div className="pointer-events-none absolute right-1 bottom-[5px] text-[17px] leading-5 text-white/60 [text-shadow:1px_1px_1px_#77777788]">
        CSDN @Seven_doctor
      </div>
    </div>
  );
}
